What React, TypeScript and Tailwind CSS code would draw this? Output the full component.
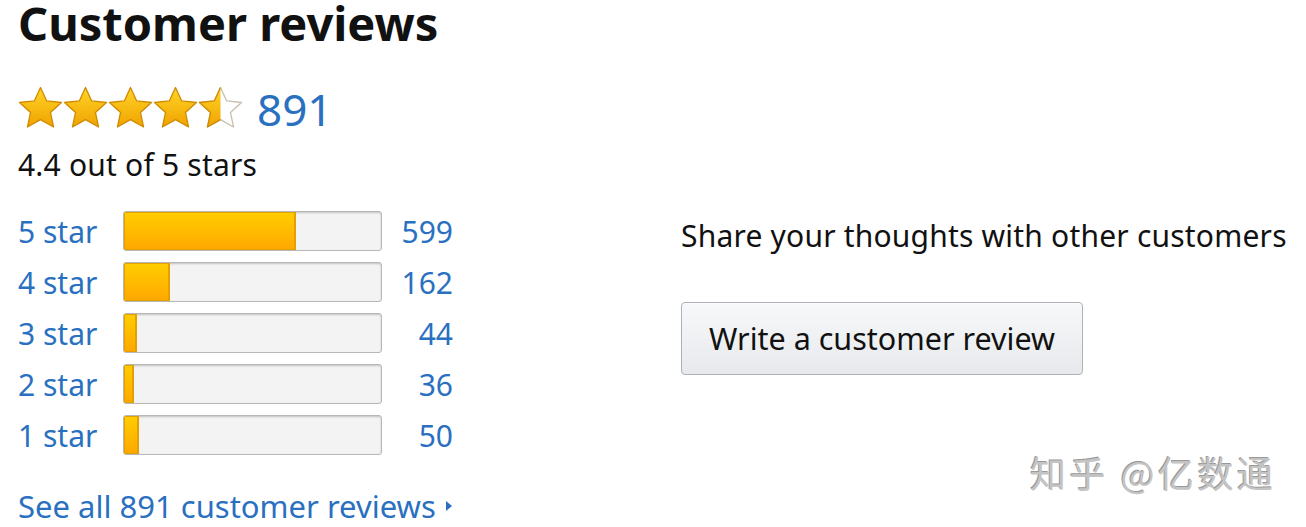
import React from "react";

const font = { fontFamily: '"Noto Sans", "Noto Sans CJK SC", sans-serif' };

const STAR =
  "M12 0.8l3.3 7.15 7.9.85-5.9 5.3 1.65 7.75L12 17.9l-6.95 3.95 1.65-7.75-5.9-5.3 7.9-.85z";

function Star({ kind }: { kind: "full" | "half" }) {
  return (
    <svg width="45" height="45" viewBox="0 0 24 24" className="block">
      <defs>
        <linearGradient id="sg" x1="0" y1="0" x2="0" y2="1">
          <stop offset="0" stopColor="#ffd528" />
          <stop offset="1" stopColor="#f0a200" />
        </linearGradient>
        <clipPath id="halfclip">
          <rect x="0" y="0" width="12" height="24" />
        </clipPath>
      </defs>
      {kind === "full" ? (
        <path d={STAR} fill="url(#sg)" stroke="#cf8b00" strokeWidth="0.7" strokeLinejoin="round" />
      ) : (
        <g>
          <path d={STAR} fill="#fff" stroke="#c9bfae" strokeWidth="0.7" strokeLinejoin="round" />
          <path
            d={STAR}
            fill="url(#sg)"
            stroke="#cf8b00"
            strokeWidth="0.7"
            strokeLinejoin="round"
            clipPath="url(#halfclip)"
          />
        </g>
      )}
    </svg>
  );
}

const rows = [
  { label: "5 star", pct: 67, count: "599" },
  { label: "4 star", pct: 18, count: "162" },
  { label: "3 star", pct: 5, count: "44" },
  { label: "2 star", pct: 4, count: "36" },
  { label: "1 star", pct: 6, count: "50" },
];

export default function App() {
  return (
    <div className="w-[1306px] h-[527px] bg-white overflow-hidden relative" style={font}>
      <div className="flex pl-[18px]">
        <div className="w-[440px] flex flex-col">
          <h1 className="text-[47px] leading-[46px] font-bold text-[#111]">
            Customer reviews
          </h1>
          <div className="flex items-center mt-[40px] h-[45px]">
            <div className="flex gap-0">
              <Star kind="full" />
              <Star kind="full" />
              <Star kind="full" />
              <Star kind="full" />
              <Star kind="half" />
            </div>
            <span className="ml-[14px] text-[44px] leading-[44px] text-[#2a70c0]">891</span>
          </div>
          <div className="text-[30px] leading-[30px] text-[#111] mt-[19px] tracking-[0.2px]">4.4 out of 5 stars</div>
          <div className="flex flex-col gap-[11px] mt-[31px]">
            {rows.map((r) => (
              <div key={r.label} className="flex items-center h-[40px]">
                <span className="w-[105px] text-[30px] text-[#2a70c0]">{r.label}</span>
                <div className="w-[259px] h-[40px] rounded-[3px] border border-[#b8b8b8] bg-[#f3f3f3] shadow-[inset_0_1px_2px_rgba(0,0,0,0.2)] overflow-hidden">
                  <div
                    className="h-full bg-gradient-to-b from-[#ffce00] to-[#ffa700] border-r border-[#e3a000] shadow-[inset_0_0_0_1px_#e3a000]"
                    style={{ width: `${r.pct}%` }}
                  />
                </div>
                <span className="w-[71px] text-right text-[30px] text-[#2a70c0]">{r.count}</span>
              </div>
            ))}
          </div>
          <div className="mt-[36px] flex items-center text-[31px] leading-[30px] text-[#2a70c0]">
            See all 891 customer reviews
            <span className="ml-[10px] w-0 h-0 border-y-[5px] border-y-transparent border-l-[6px] border-l-[#2a70c0]" />
          </div>
        </div>
        <div className="ml-[223px] flex flex-col items-start pt-[219px]">
          <div className="text-[30px] leading-[34px] text-[#111] tracking-[0.2px]">Share your thoughts with other customers</div>
          <button className="mt-[49px] w-[402px] h-[73px] rounded-[4px] border border-[#adb1b8] bg-gradient-to-b from-[#f7f8fa] to-[#e7e9ec] shadow-[0_1px_0_rgba(255,255,255,0.6)_inset] text-[30.5px] text-[#111]">
            Write a customer review
          </button>
        </div>
      </div>
      <div
        className="absolute left-[1030px] top-[445px] text-[36px] text-[#c4c4c4] tracking-[3.5px]"
        style={{ fontFamily: '"Noto Sans CJK SC", sans-serif', textShadow: "-1px -1px 0 #999" }}
      >
        知乎 @亿数通
      </div>
    </div>
  );
}
